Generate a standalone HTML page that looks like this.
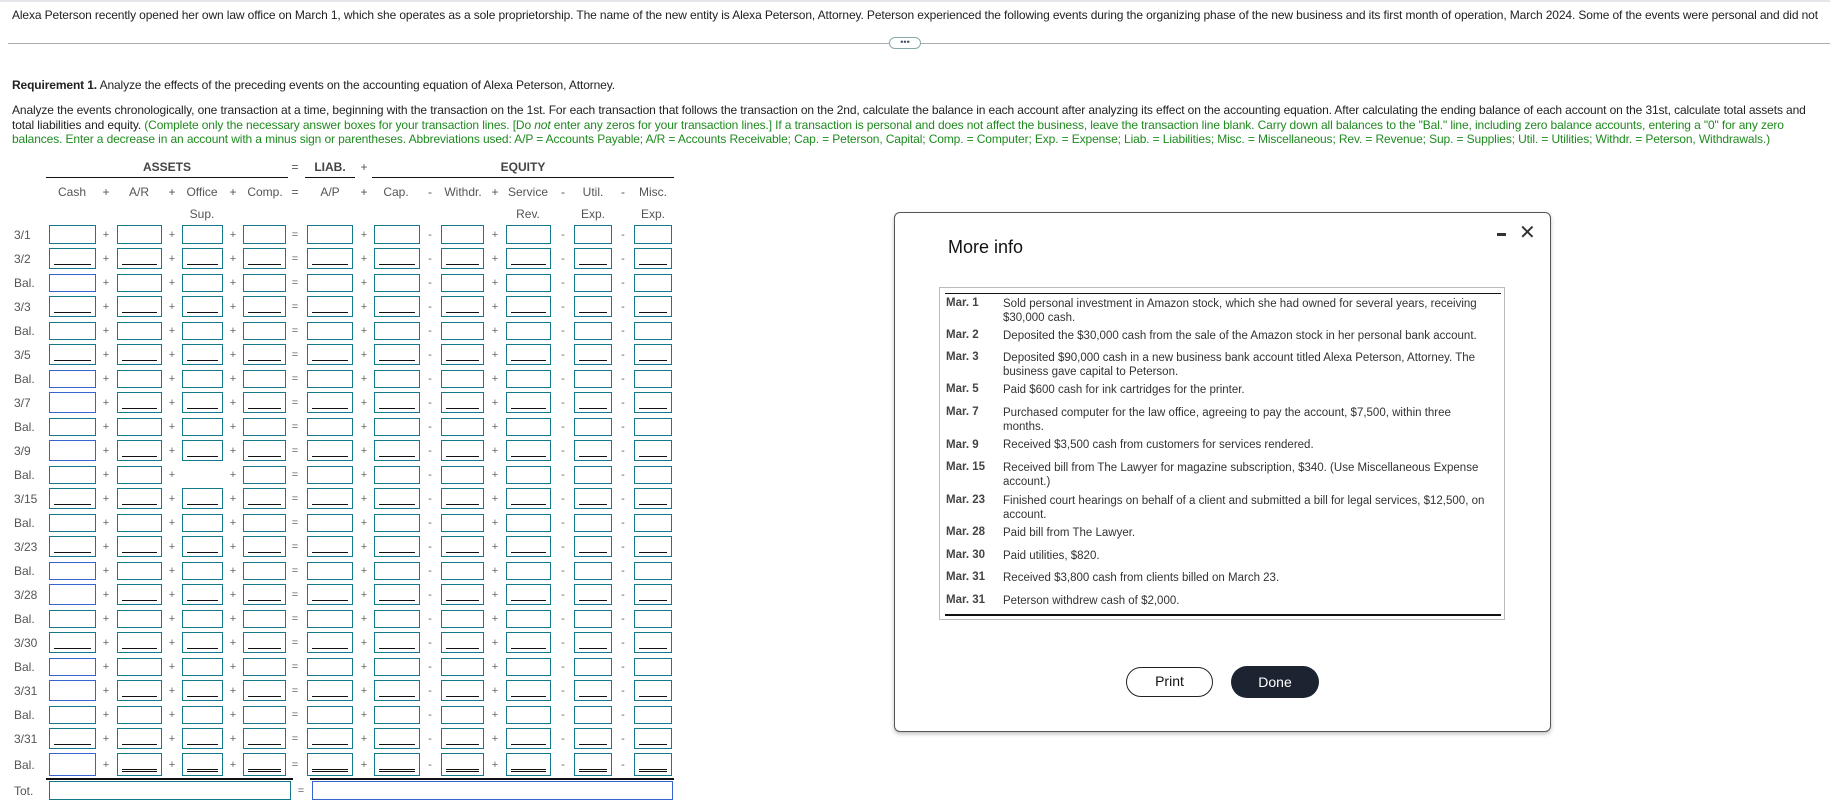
<!DOCTYPE html>
<html><head><meta charset="utf-8"><style>
*{margin:0;padding:0;box-sizing:border-box}
body{width:1830px;height:811px;overflow:hidden;background:#fff;font-family:"Liberation Sans",Arial,sans-serif;color:#222;position:relative}
.a{position:absolute;white-space:nowrap}
.p{font-size:12px;left:12px;letter-spacing:-0.12px}
.g{color:#1f8a1f}
.hd{font-size:12px;color:#555;position:absolute;white-space:nowrap;transform:translateX(-50%)}
.row{position:absolute;left:0;width:700px}
.row .lb{position:absolute;left:14px;font-size:12px;color:#555;top:50%;transform:translateY(-50%)}
.row i{position:absolute;top:0;bottom:0;border:1px solid #15798c;background:#fff}
.row i.bl{border-color:#3763cc}
.u i:not(.n)::after{content:"";position:absolute;left:4px;right:4px;bottom:3px;border-bottom:1px solid #111}
.d i:not(.n)::after{content:"";position:absolute;left:4px;right:4px;bottom:3px;border-bottom:3px double #111}
.k0{left:49px;width:47px}.k1{left:117px;width:45px}.k2{left:182px;width:41px}.k3{left:243px;width:43px}.k4{left:307px;width:46px}.k5{left:374px;width:46px}.k6{left:441px;width:43px}.k7{left:506px;width:45px}.k8{left:574px;width:38px}.k9{left:634px;width:38px}
.row s{position:absolute;text-decoration:none;font-size:11px;color:#666;top:50%;transform:translate(-50%,-50%)}
.o1{left:106px}.o2{left:172px}.o3{left:233px}.o4{left:295px}.o5{left:364px}.o6{left:430px}.o7{left:495px}.o8{left:563px}.o9{left:623px}
.mi{position:absolute;font-size:11.5px;color:#333}
.ml{left:946px;font-weight:bold;color:#444}
.mt{left:1003px}
</style></head><body>
<div class="a" style="left:0;top:0;width:1830px;height:2px;background:#e4e6ea"></div>
<div class="a p" style="top:8px">Alexa Peterson recently opened her own law office on March 1, which she operates as a sole proprietorship. The name of the new entity is Alexa Peterson, Attorney. Peterson experienced the following events during the organizing phase of the new business and its first month of operation, March 2024. Some of the events were personal and did not</div>
<div class="a" style="left:8px;top:43px;width:1822px;height:1px;background:#a8acb2"></div>
<div class="a" style="left:889px;top:37px;width:32px;height:12px;border:1px solid #8aa;border-radius:6px;background:#fff;font-size:9px;line-height:8px;text-align:center;color:#456">•••</div>

<div class="a p" style="top:78px"><b>Requirement 1.</b> Analyze the effects of the preceding events on the accounting equation of Alexa Peterson, Attorney.</div>
<div class="a p" style="top:103px">Analyze the events chronologically, one transaction at a time, beginning with the transaction on the 1st. For each transaction that follows the transaction on the 2nd, calculate the balance in each account after analyzing its effect on the accounting equation. After calculating the ending balance of each account on the 31st, calculate total assets and</div>
<div class="a p" style="top:118px">total liabilities and equity. <span class="g">(Complete only the necessary answer boxes for your transaction lines. [Do <i>not</i> enter any zeros for your transaction lines.] If a transaction is personal and does not affect the business, leave the transaction line blank. Carry down all balances to the "Bal." line, including zero balance accounts, entering a "0" for any zero</span></div>
<div class="a p g" style="top:132px">balances. Enter a decrease in an account with a minus sign or parentheses. Abbreviations used: A/P = Accounts Payable; A/R = Accounts Receivable; Cap. = Peterson, Capital; Comp. = Computer; Exp. = Expense; Liab. = Liabilities; Misc. = Miscellaneous; Rev. = Revenue; Sup. = Supplies; Util. = Utilities; Withdr. = Peterson, Withdrawals.)</div>

<div class="hd" style="left:167px;top:160px;font-weight:bold;color:#444">ASSETS</div>
<div class="hd" style="left:295px;top:160px">=</div>
<div class="hd" style="left:330px;top:160px;font-weight:bold;color:#444">LIAB.</div>
<div class="hd" style="left:364px;top:160px">+</div>
<div class="hd" style="left:523px;top:160px;font-weight:bold;color:#444">EQUITY</div>
<div class="a" style="left:46px;top:177px;width:242px;height:1px;background:#111"></div>
<div class="a" style="left:305px;top:177px;width:50px;height:1px;background:#111"></div>
<div class="a" style="left:372px;top:177px;width:302px;height:1px;background:#111"></div>
<div class="hd" style="left:72px;top:185px">Cash</div><div class="hd" style="left:106px;top:185px">+</div>
<div class="hd" style="left:139px;top:185px">A/R</div><div class="hd" style="left:172px;top:185px">+</div>
<div class="hd" style="left:202px;top:185px">Office</div><div class="hd" style="left:233px;top:185px">+</div>
<div class="hd" style="left:265px;top:185px">Comp.</div><div class="hd" style="left:295px;top:185px">=</div>
<div class="hd" style="left:330px;top:185px">A/P</div><div class="hd" style="left:364px;top:185px">+</div>
<div class="hd" style="left:396px;top:185px">Cap.</div><div class="hd" style="left:430px;top:185px">-</div>
<div class="hd" style="left:463px;top:185px">Withdr.</div><div class="hd" style="left:495px;top:185px">+</div>
<div class="hd" style="left:528px;top:185px">Service</div><div class="hd" style="left:563px;top:185px">-</div>
<div class="hd" style="left:593px;top:185px">Util.</div><div class="hd" style="left:623px;top:185px">-</div>
<div class="hd" style="left:653px;top:185px">Misc.</div>
<div class="hd" style="left:202px;top:207px">Sup.</div>
<div class="hd" style="left:528px;top:207px">Rev.</div>
<div class="hd" style="left:593px;top:207px">Exp.</div>
<div class="hd" style="left:653px;top:207px">Exp.</div>

<div class="row" style="top:225px;height:19px"><span class="lb">3/1</span><i class="k0"></i><s class="o1">+</s><i class="k1"></i><s class="o2">+</s><i class="k2"></i><s class="o3">+</s><i class="k3"></i><s class="o4">=</s><i class="k4"></i><s class="o5">+</s><i class="k5"></i><s class="o6">-</s><i class="k6"></i><s class="o7">+</s><i class="k7"></i><s class="o8">-</s><i class="k8"></i><s class="o9">-</s><i class="k9"></i></div>

<div class="row u" style="top:248px;height:21px"><span class="lb">3/2</span><i class="k0"></i><s class="o1">+</s><i class="k1"></i><s class="o2">+</s><i class="k2"></i><s class="o3">+</s><i class="k3"></i><s class="o4">=</s><i class="k4"></i><s class="o5">+</s><i class="k5"></i><s class="o6">-</s><i class="k6"></i><s class="o7">+</s><i class="k7"></i><s class="o8">-</s><i class="k8"></i><s class="o9">-</s><i class="k9"></i></div>
<div class="row" style="top:274px;height:18px"><span class="lb">Bal.</span><i class="k0 bl"></i><s class="o1">+</s><i class="k1"></i><s class="o2">+</s><i class="k2"></i><s class="o3">+</s><i class="k3"></i><s class="o4">=</s><i class="k4"></i><s class="o5">+</s><i class="k5"></i><s class="o6">-</s><i class="k6"></i><s class="o7">+</s><i class="k7"></i><s class="o8">-</s><i class="k8"></i><s class="o9">-</s><i class="k9"></i></div>

<div class="row u" style="top:296px;height:21px"><span class="lb">3/3</span><i class="k0"></i><s class="o1">+</s><i class="k1"></i><s class="o2">+</s><i class="k2"></i><s class="o3">+</s><i class="k3"></i><s class="o4">=</s><i class="k4"></i><s class="o5">+</s><i class="k5"></i><s class="o6">-</s><i class="k6"></i><s class="o7">+</s><i class="k7"></i><s class="o8">-</s><i class="k8"></i><s class="o9">-</s><i class="k9"></i></div>
<div class="row" style="top:322px;height:18px"><span class="lb">Bal.</span><i class="k0"></i><s class="o1">+</s><i class="k1"></i><s class="o2">+</s><i class="k2"></i><s class="o3">+</s><i class="k3"></i><s class="o4">=</s><i class="k4"></i><s class="o5">+</s><i class="k5"></i><s class="o6">-</s><i class="k6"></i><s class="o7">+</s><i class="k7"></i><s class="o8">-</s><i class="k8"></i><s class="o9">-</s><i class="k9"></i></div>

<div class="row u" style="top:344px;height:21px"><span class="lb">3/5</span><i class="k0"></i><s class="o1">+</s><i class="k1"></i><s class="o2">+</s><i class="k2"></i><s class="o3">+</s><i class="k3"></i><s class="o4">=</s><i class="k4"></i><s class="o5">+</s><i class="k5"></i><s class="o6">-</s><i class="k6"></i><s class="o7">+</s><i class="k7"></i><s class="o8">-</s><i class="k8"></i><s class="o9">-</s><i class="k9"></i></div>
<div class="row" style="top:370px;height:18px"><span class="lb">Bal.</span><i class="k0 bl"></i><s class="o1">+</s><i class="k1"></i><s class="o2">+</s><i class="k2"></i><s class="o3">+</s><i class="k3"></i><s class="o4">=</s><i class="k4"></i><s class="o5">+</s><i class="k5"></i><s class="o6">-</s><i class="k6"></i><s class="o7">+</s><i class="k7"></i><s class="o8">-</s><i class="k8"></i><s class="o9">-</s><i class="k9"></i></div>

<div class="row u" style="top:392px;height:21px"><span class="lb">3/7</span><i class="k0 n bl"></i><s class="o1">+</s><i class="k1"></i><s class="o2">+</s><i class="k2"></i><s class="o3">+</s><i class="k3"></i><s class="o4">=</s><i class="k4"></i><s class="o5">+</s><i class="k5"></i><s class="o6">-</s><i class="k6"></i><s class="o7">+</s><i class="k7"></i><s class="o8">-</s><i class="k8"></i><s class="o9">-</s><i class="k9"></i></div>
<div class="row" style="top:418px;height:18px"><span class="lb">Bal.</span><i class="k0"></i><s class="o1">+</s><i class="k1"></i><s class="o2">+</s><i class="k2"></i><s class="o3">+</s><i class="k3"></i><s class="o4">=</s><i class="k4"></i><s class="o5">+</s><i class="k5"></i><s class="o6">-</s><i class="k6"></i><s class="o7">+</s><i class="k7"></i><s class="o8">-</s><i class="k8"></i><s class="o9">-</s><i class="k9"></i></div>

<div class="row u" style="top:440px;height:21px"><span class="lb">3/9</span><i class="k0 n bl"></i><s class="o1">+</s><i class="k1"></i><s class="o2">+</s><i class="k2"></i><s class="o3">+</s><i class="k3"></i><s class="o4">=</s><i class="k4"></i><s class="o5">+</s><i class="k5"></i><s class="o6">-</s><i class="k6"></i><s class="o7">+</s><i class="k7"></i><s class="o8">-</s><i class="k8"></i><s class="o9">-</s><i class="k9"></i></div>
<div class="row" style="top:466px;height:18px"><span class="lb">Bal.</span><i class="k0"></i><s class="o1">+</s><i class="k1"></i><s class="o2">+</s><s class="o3">+</s><i class="k3"></i><s class="o4">=</s><i class="k4"></i><s class="o5">+</s><i class="k5"></i><s class="o6">-</s><i class="k6"></i><s class="o7">+</s><i class="k7"></i><s class="o8">-</s><i class="k8"></i><s class="o9">-</s><i class="k9"></i></div>

<div class="row u" style="top:488px;height:21px"><span class="lb">3/15</span><i class="k0"></i><s class="o1">+</s><i class="k1"></i><s class="o2">+</s><i class="k2"></i><s class="o3">+</s><i class="k3"></i><s class="o4">=</s><i class="k4"></i><s class="o5">+</s><i class="k5"></i><s class="o6">-</s><i class="k6"></i><s class="o7">+</s><i class="k7"></i><s class="o8">-</s><i class="k8"></i><s class="o9">-</s><i class="k9"></i></div>
<div class="row" style="top:514px;height:18px"><span class="lb">Bal.</span><i class="k0"></i><s class="o1">+</s><i class="k1"></i><s class="o2">+</s><i class="k2"></i><s class="o3">+</s><i class="k3"></i><s class="o4">=</s><i class="k4"></i><s class="o5">+</s><i class="k5"></i><s class="o6">-</s><i class="k6"></i><s class="o7">+</s><i class="k7"></i><s class="o8">-</s><i class="k8"></i><s class="o9">-</s><i class="k9"></i></div>

<div class="row u" style="top:536px;height:21px"><span class="lb">3/23</span><i class="k0"></i><s class="o1">+</s><i class="k1"></i><s class="o2">+</s><i class="k2"></i><s class="o3">+</s><i class="k3"></i><s class="o4">=</s><i class="k4"></i><s class="o5">+</s><i class="k5"></i><s class="o6">-</s><i class="k6"></i><s class="o7">+</s><i class="k7"></i><s class="o8">-</s><i class="k8"></i><s class="o9">-</s><i class="k9"></i></div>
<div class="row" style="top:562px;height:18px"><span class="lb">Bal.</span><i class="k0 bl"></i><s class="o1">+</s><i class="k1"></i><s class="o2">+</s><i class="k2"></i><s class="o3">+</s><i class="k3"></i><s class="o4">=</s><i class="k4"></i><s class="o5">+</s><i class="k5"></i><s class="o6">-</s><i class="k6"></i><s class="o7">+</s><i class="k7"></i><s class="o8">-</s><i class="k8"></i><s class="o9">-</s><i class="k9"></i></div>

<div class="row u" style="top:584px;height:21px"><span class="lb">3/28</span><i class="k0 n bl"></i><s class="o1">+</s><i class="k1"></i><s class="o2">+</s><i class="k2"></i><s class="o3">+</s><i class="k3"></i><s class="o4">=</s><i class="k4"></i><s class="o5">+</s><i class="k5"></i><s class="o6">-</s><i class="k6"></i><s class="o7">+</s><i class="k7"></i><s class="o8">-</s><i class="k8"></i><s class="o9">-</s><i class="k9"></i></div>
<div class="row" style="top:610px;height:18px"><span class="lb">Bal.</span><i class="k0"></i><s class="o1">+</s><i class="k1"></i><s class="o2">+</s><i class="k2"></i><s class="o3">+</s><i class="k3"></i><s class="o4">=</s><i class="k4"></i><s class="o5">+</s><i class="k5"></i><s class="o6">-</s><i class="k6"></i><s class="o7">+</s><i class="k7"></i><s class="o8">-</s><i class="k8"></i><s class="o9">-</s><i class="k9"></i></div>

<div class="row u" style="top:632px;height:21px"><span class="lb">3/30</span><i class="k0"></i><s class="o1">+</s><i class="k1"></i><s class="o2">+</s><i class="k2"></i><s class="o3">+</s><i class="k3"></i><s class="o4">=</s><i class="k4"></i><s class="o5">+</s><i class="k5"></i><s class="o6">-</s><i class="k6"></i><s class="o7">+</s><i class="k7"></i><s class="o8">-</s><i class="k8"></i><s class="o9">-</s><i class="k9"></i></div>
<div class="row" style="top:658px;height:18px"><span class="lb">Bal.</span><i class="k0 bl"></i><s class="o1">+</s><i class="k1"></i><s class="o2">+</s><i class="k2"></i><s class="o3">+</s><i class="k3"></i><s class="o4">=</s><i class="k4"></i><s class="o5">+</s><i class="k5"></i><s class="o6">-</s><i class="k6"></i><s class="o7">+</s><i class="k7"></i><s class="o8">-</s><i class="k8"></i><s class="o9">-</s><i class="k9"></i></div>

<div class="row u" style="top:680px;height:21px"><span class="lb">3/31</span><i class="k0 n bl"></i><s class="o1">+</s><i class="k1"></i><s class="o2">+</s><i class="k2"></i><s class="o3">+</s><i class="k3"></i><s class="o4">=</s><i class="k4"></i><s class="o5">+</s><i class="k5"></i><s class="o6">-</s><i class="k6"></i><s class="o7">+</s><i class="k7"></i><s class="o8">-</s><i class="k8"></i><s class="o9">-</s><i class="k9"></i></div>
<div class="row" style="top:706px;height:18px"><span class="lb">Bal.</span><i class="k0"></i><s class="o1">+</s><i class="k1"></i><s class="o2">+</s><i class="k2"></i><s class="o3">+</s><i class="k3"></i><s class="o4">=</s><i class="k4"></i><s class="o5">+</s><i class="k5"></i><s class="o6">-</s><i class="k6"></i><s class="o7">+</s><i class="k7"></i><s class="o8">-</s><i class="k8"></i><s class="o9">-</s><i class="k9"></i></div>

<div class="row u" style="top:728px;height:21px"><span class="lb">3/31</span><i class="k0"></i><s class="o1">+</s><i class="k1"></i><s class="o2">+</s><i class="k2"></i><s class="o3">+</s><i class="k3"></i><s class="o4">=</s><i class="k4"></i><s class="o5">+</s><i class="k5"></i><s class="o6">-</s><i class="k6"></i><s class="o7">+</s><i class="k7"></i><s class="o8">-</s><i class="k8"></i><s class="o9">-</s><i class="k9"></i></div>
<div class="row d" style="top:753px;height:23px"><span class="lb">Bal.</span><i class="k0 n bl"></i><s class="o1">+</s><i class="k1"></i><s class="o2">+</s><i class="k2"></i><s class="o3">+</s><i class="k3"></i><s class="o4">=</s><i class="k4"></i><s class="o5">+</s><i class="k5"></i><s class="o6">-</s><i class="k6"></i><s class="o7">+</s><i class="k7"></i><s class="o8">-</s><i class="k8"></i><s class="o9">-</s><i class="k9"></i></div>
<div class="a" style="left:46px;top:778px;width:247px;height:2px;background:#111"></div>
<div class="a" style="left:310px;top:778px;width:364px;height:2px;background:#111"></div>
<div class="row" style="top:781px;height:19px"><span class="lb">Tot.</span><i style="left:49px;width:242px"></i><s style="left:301px">=</s><i class="bl" style="left:312px;width:361px"></i></div>

<div class="a" style="left:894px;top:212px;width:657px;height:520px;border:1px solid #555;border-radius:6px;background:#fff;box-shadow:0 2px 4px rgba(0,0,0,.25)"></div>
<div class="a" style="left:948px;top:237px;font-size:18px;color:#111">More info</div>
<div class="a" style="left:1497px;top:233px;width:9px;height:3px;background:#333"></div>
<div class="a" style="left:1519px;top:220px;font-size:20px;color:#333;font-weight:300">✕</div>
<div class="a" style="left:939px;top:287px;width:566px;height:333px;border:1px solid #bbb"></div>
<div class="a" style="left:945px;top:293px;width:556px;height:1px;background:#111"></div>
<div class="a" style="left:945px;top:614px;width:556px;height:2px;background:#111"></div>

<div class="mi ml" style="top:297px">Mar. 1</div><div class="mi mt" style="top:298px">Sold personal investment in Amazon stock, which she had owned for several years, receiving</div>
<div class="mi mt" style="top:312px">$30,000 cash.</div>
<div class="mi ml" style="top:329px">Mar. 2</div><div class="mi mt" style="top:330px">Deposited the $30,000 cash from the sale of the Amazon stock in her personal bank account.</div>
<div class="mi ml" style="top:351px">Mar. 3</div><div class="mi mt" style="top:352px">Deposited $90,000 cash in a new business bank account titled Alexa Peterson, Attorney. The</div>
<div class="mi mt" style="top:366px">business gave capital to Peterson.</div>
<div class="mi ml" style="top:383px">Mar. 5</div><div class="mi mt" style="top:384px">Paid $600 cash for ink cartridges for the printer.</div>
<div class="mi ml" style="top:406px">Mar. 7</div><div class="mi mt" style="top:407px">Purchased computer for the law office, agreeing to pay the account, $7,500, within three</div>
<div class="mi mt" style="top:421px">months.</div>
<div class="mi ml" style="top:439px">Mar. 9</div><div class="mi mt" style="top:439px">Received $3,500 cash from customers for services rendered.</div>
<div class="mi ml" style="top:461px">Mar. 15</div><div class="mi mt" style="top:462px">Received bill from The Lawyer for magazine subscription, $340. (Use Miscellaneous Expense</div>
<div class="mi mt" style="top:476px">account.)</div>
<div class="mi ml" style="top:494px">Mar. 23</div><div class="mi mt" style="top:495px">Finished court hearings on behalf of a client and submitted a bill for legal services, $12,500, on</div>
<div class="mi mt" style="top:509px">account.</div>
<div class="mi ml" style="top:526px">Mar. 28</div><div class="mi mt" style="top:527px">Paid bill from The Lawyer.</div>
<div class="mi ml" style="top:549px">Mar. 30</div><div class="mi mt" style="top:550px">Paid utilities, $820.</div>
<div class="mi ml" style="top:571px">Mar. 31</div><div class="mi mt" style="top:572px">Received $3,800 cash from clients billed on March 23.</div>
<div class="mi ml" style="top:594px">Mar. 31</div><div class="mi mt" style="top:595px">Peterson withdrew cash of $2,000.</div>

<div class="a" style="left:1126px;top:667px;width:87px;height:30px;border:1.5px solid #222;border-radius:15px;font-size:14px;text-align:center;line-height:27px;color:#111">Print</div>
<div class="a" style="left:1231px;top:666px;width:88px;height:32px;border-radius:16px;background:#1c2431;font-size:14px;text-align:center;line-height:32px;color:#fff">Done</div>
</body></html>
